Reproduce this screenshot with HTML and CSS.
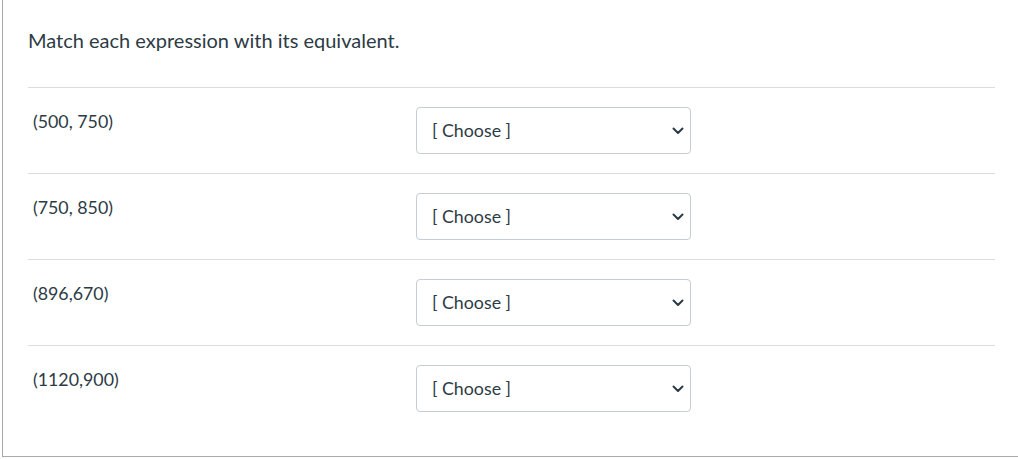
FILE: index.html
```html
<!DOCTYPE html>
<html>
<head>
<meta charset="utf-8">
<link rel="stylesheet" href="styles.css">
</head>
<body>
<div class="question">
  <div class="question-text">Match each expression with its equivalent.</div>
  <div class="answers">
    <div class="answer-row">
      <div class="answer-label">(500, 750)</div>
      <div class="select"><span class="select-text">[ Choose ]</span><svg class="chevron" width="12" height="8" viewBox="0 0 12 8"><path d="M1.5 1.5 L6 6 L10.5 1.5" fill="none" stroke="#2d3b45" stroke-width="2" stroke-linecap="round" stroke-linejoin="round"/></svg></div>
    </div>
    <div class="answer-row">
      <div class="answer-label">(750, 850)</div>
      <div class="select"><span class="select-text">[ Choose ]</span><svg class="chevron" width="12" height="8" viewBox="0 0 12 8"><path d="M1.5 1.5 L6 6 L10.5 1.5" fill="none" stroke="#2d3b45" stroke-width="2" stroke-linecap="round" stroke-linejoin="round"/></svg></div>
    </div>
    <div class="answer-row">
      <div class="answer-label">(896,670)</div>
      <div class="select"><span class="select-text">[ Choose ]</span><svg class="chevron" width="12" height="8" viewBox="0 0 12 8"><path d="M1.5 1.5 L6 6 L10.5 1.5" fill="none" stroke="#2d3b45" stroke-width="2" stroke-linecap="round" stroke-linejoin="round"/></svg></div>
    </div>
    <div class="answer-row">
      <div class="answer-label">(1120,900)</div>
      <div class="select"><span class="select-text">[ Choose ]</span><svg class="chevron" width="12" height="8" viewBox="0 0 12 8"><path d="M1.5 1.5 L6 6 L10.5 1.5" fill="none" stroke="#2d3b45" stroke-width="2" stroke-linecap="round" stroke-linejoin="round"/></svg></div>
    </div>
  </div>
</div>
</body>
</html>
```
FILE: styles.css
```css
html, body {
  margin: 0;
  padding: 0;
  background: #fff;
}
body {
  font-family: Lato, "Noto Sans", sans-serif;
  color: #2d3b45;
}
.question {
  margin-left: 2px;
  width: 1030px;
  height: 456px;
  border-left: 1px solid #a9a9a9;
  border-bottom: 1px solid #a9a9a9;
  box-sizing: content-box;
  padding: 0;
}
.question-text {
  padding-top: 28px;
  margin-left: 25px;
  font-size: 20px;
  line-height: 24px;
  height: 87px;
  box-sizing: border-box;
}
.answers {
  margin-left: 25px;
  width: 967px;
}
.answer-row {
  border-top: 1px solid #dcdcdc;
  padding: 19px 0 19px 5px;
  height: 86px;
  box-sizing: border-box;
  display: grid;
  grid-template-columns: 383px 275px;
  align-items: start;
}
.answer-label {
  font-size: 17.8px;
  line-height: 24px;
  padding-top: 2px;
}
.select {
  height: 47px;
  box-sizing: border-box;
  border: 1px solid #c7cdd1;
  border-radius: 4px;
  display: flex;
  align-items: center;
  justify-content: space-between;
  padding: 0 6px 2px 15px;
  font-size: 17.8px;
}
.chevron {
  display: block;
  margin-top: 2px;
}
```
